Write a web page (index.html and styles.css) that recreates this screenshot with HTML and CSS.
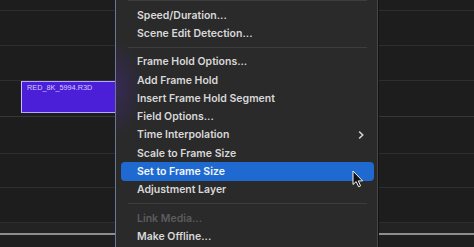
FILE: index.html
```html
<!DOCTYPE html>
<html>
<head>
<meta charset="utf-8">
<link rel="stylesheet" href="styles.css">
</head>
<body>
<div class="stage">
  <div class="timeline">
    <div class="row r1"></div>
    <div class="row r2"></div>
    <div class="row r3"></div>
    <div class="row r4">
      <div class="clip"><span class="clip-name">RED_8K_5994.R3D</span></div>
    </div>
    <div class="row r5"></div>
    <div class="row r6"></div>
    <div class="row r7"></div>
    <div class="row r8"></div>
    <div class="row r9"></div>
  </div>

  <div class="menu">
    <div class="sep"></div>
    <div class="item">Speed/Duration...</div>
    <div class="item">Scene Edit Detection...</div>
    <div class="sep"></div>
    <div class="item">Frame Hold Options...</div>
    <div class="item">Add Frame Hold</div>
    <div class="item">Insert Frame Hold Segment</div>
    <div class="item">Field Options...</div>
    <div class="item has-sub">Time Interpolation
      <svg class="chev" width="6" height="8" viewBox="0 0 6 8"><polyline points="1.6,1 4.8,4 1.6,7" fill="none" stroke="#d6d6d6" stroke-width="1.6" stroke-linecap="round" stroke-linejoin="round"/></svg>
    </div>
    <div class="item">Scale to Frame Size</div>
    <div class="item active">Set to Frame Size</div>
    <div class="item">Adjustment Layer</div>
    <div class="sep"></div>
    <div class="item disabled">Link Media...</div>
    <div class="item">Make Offline...</div>
  </div>

  <svg class="cursor" width="12" height="18" viewBox="0 0 12 18">
    <path d="M1 1 L1 14.5 L4.2 11.6 L6.6 16.8 L8.6 15.9 L6.3 10.9 L10.6 10.9 Z" fill="#111" stroke="#f2f2f2" stroke-width="1" stroke-linejoin="round"/>
  </svg>
</div>
</body>
</html>
```

FILE: styles.css
```css
* { box-sizing: border-box; }
html, body {
  margin: 0;
  padding: 0;
  background: #1d1d1e;
}
.stage {
  position: relative;
  width: 474px;
  height: 247px;
  overflow: hidden;
  font-family: Inter, "Liberation Sans", sans-serif;
}
.timeline {
  display: flex;
  flex-direction: column;
  width: 474px;
  height: 247px;
  background: #1d1d1e;
}
.row {
  flex: none;
  border-bottom: 1px solid #2e2e2f;
}
.r1 { height: 11px; }
.r2 { height: 35px; }
.r3 { height: 35px; }
.r4 { height: 36px; border-bottom-color: #363638; }
.r5 { height: 37px; }
.r6 { height: 34px; }
.r7 { height: 35px; }
.r8 { height: 12px; background: #232324; border-bottom: 2px solid #8e8e8e; }
.r9 { flex: 1; border-bottom: none; background: #1f1f20; }

.clip {
  margin-left: 21px;
  width: 110px;
  height: 32px;
  background: #4b1fd8;
  border-top: 1px solid #b7a6ff;
  border-bottom: 1px solid #b7a6ff;
  border-left: 1px solid #c9bcff;
  padding: 1px 0 0 5px;
}
.clip-name {
  display: block;
  font-family: "Liberation Sans", Arial, sans-serif;
  font-size: 7.3px;
  line-height: 10px;
  color: #d4cbff;
}

.menu {
  position: absolute;
  left: 115px;
  top: -4px;
  width: 263px;
  height: 260px;
  background:
    radial-gradient(ellipse 26px 48px at 0 92px, rgba(90, 40, 200, 0.28), rgba(90, 40, 200, 0) 100%),
    #2a2a2b;
  border-left: 1px solid #6c7892;
  border-right: 1px solid #474748;
  box-shadow: 1px 0 0 #121213;
}
.sep {
  height: 10px;
  margin: 0 10px 0 12px;
  position: relative;
}
.sep::after {
  content: "";
  position: absolute;
  left: 0;
  right: 0;
  top: 4px;
  height: 1px;
  background: #3d3d3e;
}
.item {
  display: flex;
  align-items: center;
  height: 18.3px;
  margin: 0 3px 0 5px;
  padding-left: 16px;
  padding-right: 10px;
  font-size: 10.5px;
  font-weight: 600;
  color: #d8d8d8;
  border-radius: 4px;
  white-space: nowrap;
}
.item.has-sub { justify-content: space-between; }
.item.active {
  background: #1e6ad1;
  color: #f4f6fa;
}
.item.disabled { color: #5c5c5e; }
.chev { display: block; }

.cursor {
  position: absolute;
  left: 352px;
  top: 170px;
}
```
